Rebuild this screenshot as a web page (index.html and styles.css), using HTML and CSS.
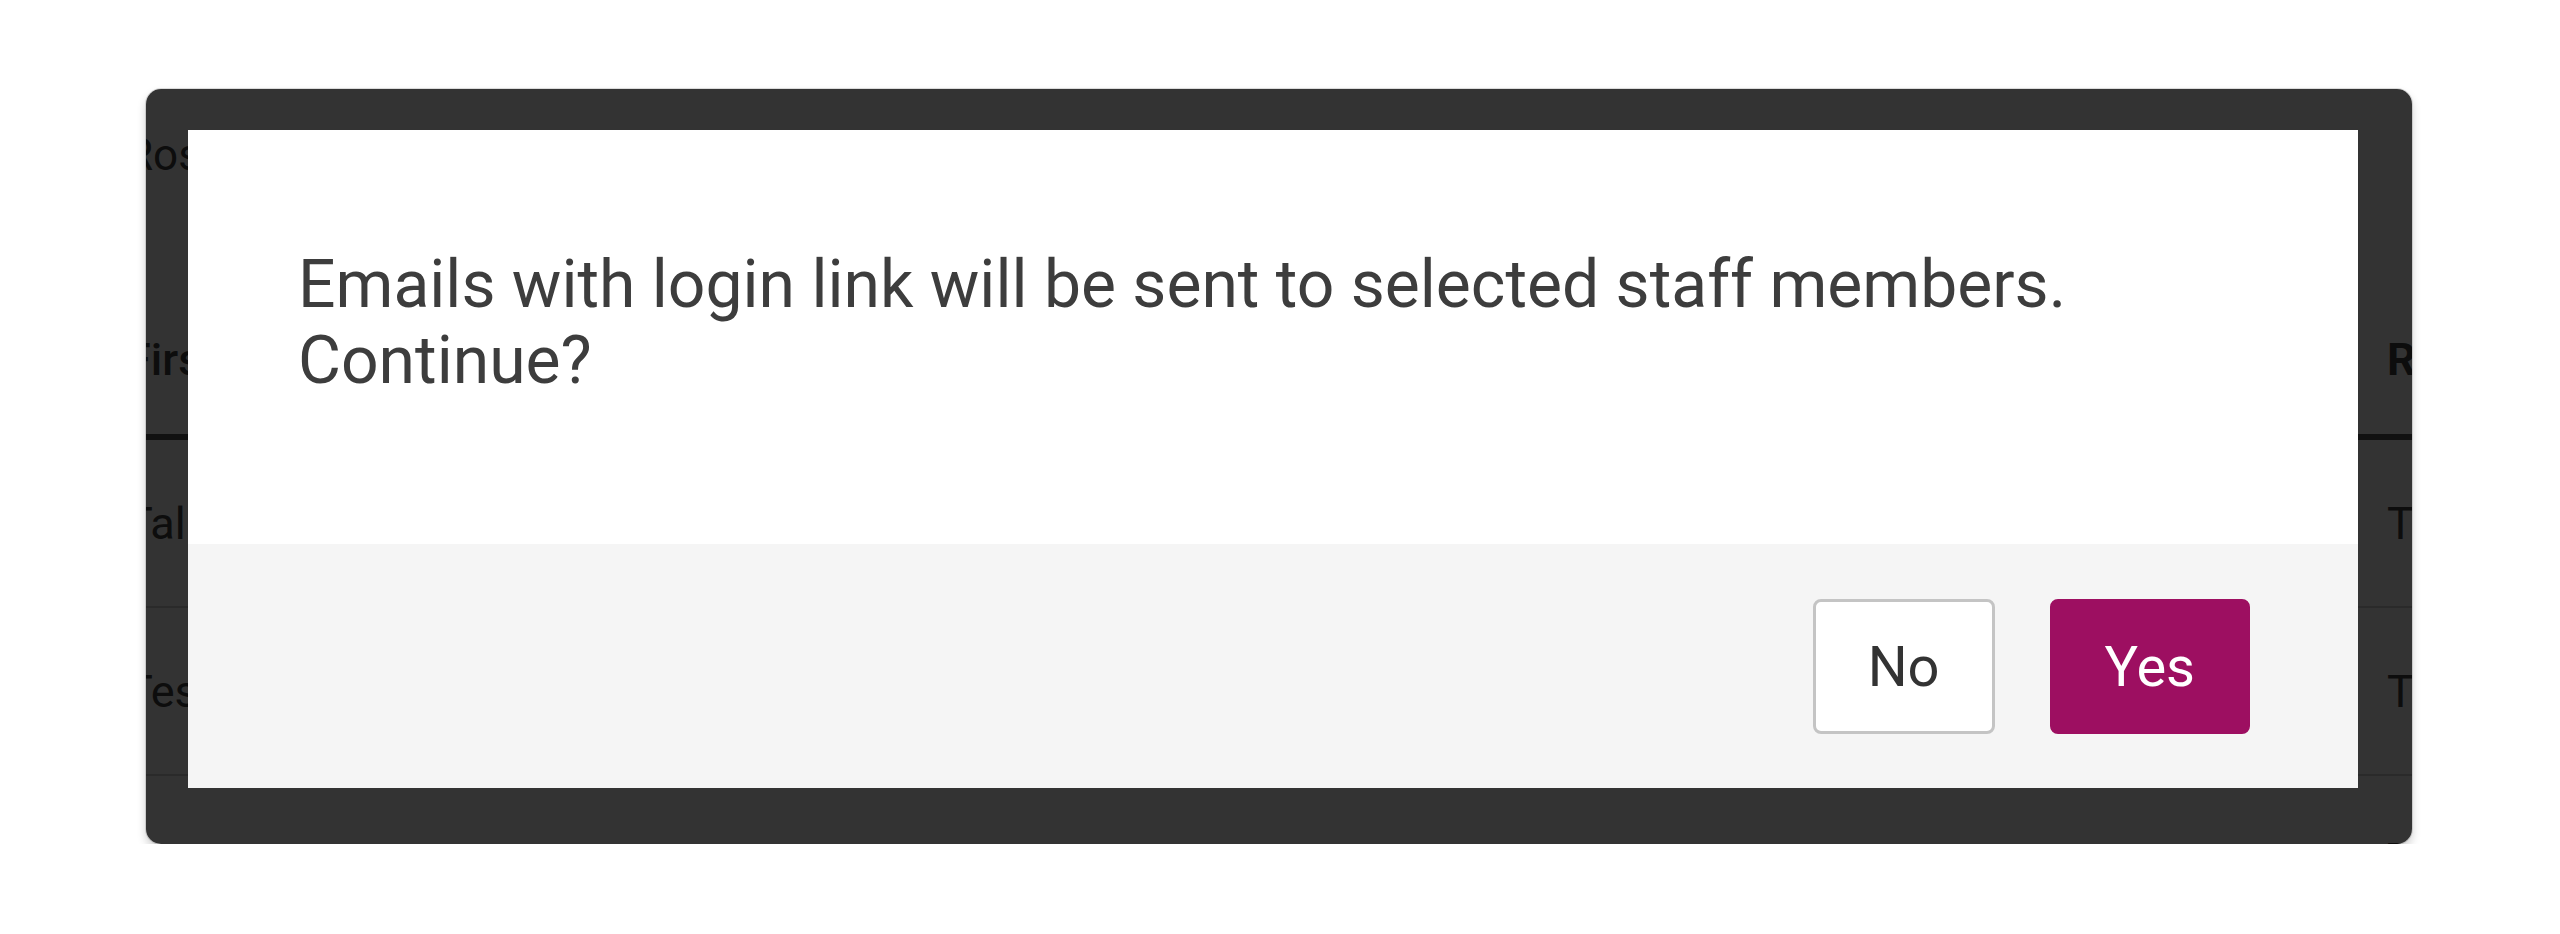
FILE: index.html
```html
<!DOCTYPE html>
<html lang="en">
<head>
    <meta charset="UTF-8">
    <meta name="viewport" content="width=device-width, initial-scale=1.0">
    <title>Staff members</title>
    <link rel="stylesheet" href="styles.css">
</head>
<body>
    <div class="stage">
        <div class="window">
            <div class="page">
                <h1 class="page-title">Roster</h1>
                <div class="staff-table">
                    <div class="row head">
                        <span>First name</span>
                        <span>Role</span>
                    </div>
                    <div class="row">
                        <span>Talia</span>
                        <span>Teacher</span>
                    </div>
                    <div class="row">
                        <span>Test</span>
                        <span>Teacher</span>
                    </div>
                    <div class="row">
                        <span>Sam</span>
                        <span>Teacher</span>
                    </div>
                </div>
            </div>

            <!-- confirm dialog -->
            <div class="overlay">
                <div class="dialog">
                    <div class="dialog-body">
                        <p>Emails with login link will be sent to selected staff members.<br>Continue?</p>
                    </div>
                    <div class="dialog-footer">
                        <button class="btn btn-no">No</button>
                        <button class="btn btn-yes">Yes</button>
                    </div>
                </div>
            </div>
        </div>
    </div>
</body>
</html>
```

FILE: styles.css
```css
body {
    font-family: Roboto, 'Liberation Sans', sans-serif;
    margin: 0;
    padding: 0;
    background-color: #fff;
    color: #444;
}
.stage {
    padding: 89px 0 0 146px;
}
.window {
    position: relative;
    width: 2266px;
    height: 755px;
    background-color: #fff;
    border-radius: 15px;
    overflow: hidden;
    box-shadow: 0 0 0 1px rgba(0, 0, 0, 0.12), 0 5px 10px rgba(0, 0, 0, 0.2);
}
.page {
    margin-left: -20px;
}
.page-title {
    margin: 42px 0 0;
    font-size: 44px;
    line-height: 48px;
    font-weight: 400;
}
.staff-table {
    margin-top: 105px;
}
.row {
    display: grid;
    grid-template-columns: 2261px 400px;
    align-items: center;
    height: 166px;
    font-size: 45px;
    border-bottom: 2px solid #d2d2d2;
}
.row.head {
    height: 150px;
    font-weight: 500;
    border-bottom: 6px solid #555;
}
.row.head span:last-child {
    font-weight: 700;
}
.overlay {
    position: absolute;
    top: 0;
    left: 0;
    right: 0;
    bottom: 0;
    background-color: rgba(0, 0, 0, 0.8);
    padding: 41px 54px 0 42px;
}
.dialog {
    background-color: #fff;
}
.dialog-body {
    height: 414px;
    box-sizing: border-box;
    padding: 117px 110px 0;
}
.dialog-body p {
    margin: 0;
    font-size: 66px;
    line-height: 76px;
    color: #3d3d3d;
}
.dialog-footer {
    display: flex;
    justify-content: flex-end;
    gap: 55px;
    padding: 55px 108px 54px;
    background-color: #f5f5f5;
}
.btn {
    height: 135px;
    padding: 0 52px;
    border-radius: 8px;
    font-family: Roboto, 'Liberation Sans', sans-serif;
    font-size: 56px;
    cursor: pointer;
}
.btn-no {
    background-color: #fff;
    border: 3px solid #c4c4c4;
    color: #333;
}
.btn-yes {
    background-color: #9d0f61;
    border: 3px solid #9d0f61;
    color: #fff;
}
```
